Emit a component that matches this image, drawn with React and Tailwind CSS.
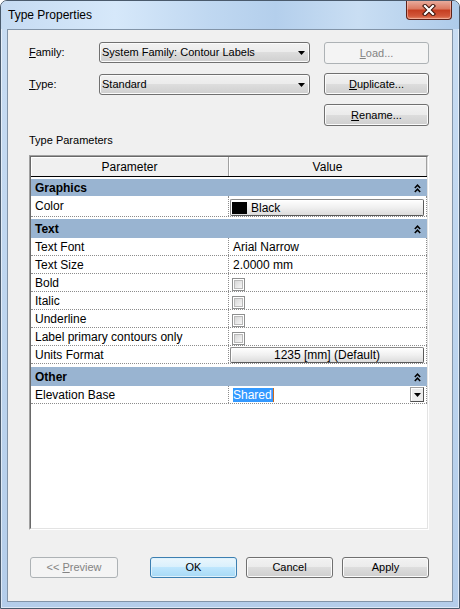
import React from "react";

const BTN =
  "flex items-center justify-center rounded-[3px] border border-[#707070] bg-[linear-gradient(180deg,#f2f2f2_0%,#ebebeb_50%,#dddddd_50%,#cfcfcf_100%)] shadow-[inset_0_0_0_1px_#fbfbfb] text-[11px] text-black";

const U = ({ children }) => <span className="underline underline-offset-[1px]">{children}</span>;

function Combo({ text, className }) {
  return (
    <div
      className={
        "flex h-[21px] w-[211px] items-center rounded-[3px] border border-[#707070] bg-[linear-gradient(180deg,#f2f2f2_0%,#ebebeb_50%,#dddddd_50%,#cfcfcf_100%)] shadow-[inset_0_0_0_1px_#fbfbfb] pl-[2px] pr-[4px] text-[11px] " +
        className
      }
    >
      <span className="flex-1 whitespace-nowrap">{text}</span>
      <svg width="7" height="4" viewBox="0 0 7 4">
        <path d="M0 0H7L3.5 4Z" fill="#000" />
      </svg>
    </div>
  );
}

function Chev() {
  return (
    <svg width="7" height="9" viewBox="0 0 7 9" className="mt-[1px]">
      <polyline points="0.8,4 3.5,1.2 6.2,4" fill="none" stroke="#000" strokeWidth="1.5" />
      <polyline points="0.8,8 3.5,5.2 6.2,8" fill="none" stroke="#000" strokeWidth="1.5" />
    </svg>
  );
}

function Group({ label, className }) {
  return (
    <div className={"flex items-center bg-[#99b4d1] pl-[4px] pr-[6px] text-[12px] font-bold " + className}>
      <span className="flex-1">{label}</span>
      <Chev />
    </div>
  );
}

function Row({ label, children, className, valueClass }) {
  return (
    <div className={"flex border-b border-dotted border-[#8c8c8c] " + className}>
      <div className="flex w-[198px] items-center border-r border-dotted border-[#8c8c8c] pl-[4px] whitespace-nowrap">
        {label}
      </div>
      <div className={"flex w-[198px] border-r border-dotted border-[#8c8c8c] " + valueClass}>{children}</div>
    </div>
  );
}

function Check() {
  return (
    <div className="ml-[3px] mt-[4px] h-[13px] w-[13px] border border-[#8e8f8f] bg-white p-[1px]">
      <div className="h-full w-full border border-[#b9b9b9] bg-[linear-gradient(135deg,#d8d8d8,#f6f6f6)]" />
    </div>
  );
}

const CELLBTN =
  "ml-[1px] flex w-[194px] rounded-[2px] border border-[#8a8a8a] border-r-[#5a5a5a] border-b-[#5a5a5a] bg-[linear-gradient(180deg,#ffffff_0%,#f0f0f0_50%,#dcdcdc_100%)] shadow-[inset_1px_1px_0_#ffffff]";

export default function App() {
  return (
    <div
      className="flex h-[609px] w-[460px] flex-col overflow-hidden rounded-t-[7px] border border-[#4a5a6c] bg-[linear-gradient(180deg,#c9ddf3_0%,#bcd4ee_60%,#b4cdea_100%)] shadow-[inset_0_0_0_1px_rgba(255,255,255,0.55)] text-black"
      style={{ fontFamily: '"Liberation Sans", Arial, sans-serif' }}
    >
      {/* Title bar */}
      <div className="flex h-[28px] shrink-0 bg-[linear-gradient(90deg,#c6dbf2_0%,#d6e8fa_25%,#c0d8f1_45%,#b4cfec_60%,#c9def3_78%,#aecbea_100%)]">
        <div className="flex flex-1 items-center pl-[7px] text-[12px]">Type Properties</div>
        <div className="-mt-px mr-[7px] flex h-[20px] w-[46px] items-center justify-center rounded-b-[4px] border border-t-0 border-[#5e2219] bg-[linear-gradient(180deg,#eab1a3_0%,#dc7b63_45%,#c63f22_55%,#d2583b_85%,#e58a69_100%)] shadow-[inset_0_0_0_1px_rgba(255,210,200,0.5)]">
          <svg width="14" height="12" viewBox="0 0 14 12">
            <path d="M3 2L11 10M11 2L3 10" stroke="#3a1209" strokeWidth="4.2" strokeLinecap="square" />
            <path d="M3 2L11 10M11 2L3 10" stroke="#ffffff" strokeWidth="2.2" strokeLinecap="square" />
          </svg>
        </div>
      </div>

      {/* Client area */}
      <div className="mx-[6px] flex flex-1 flex-col border border-[#8294a8] bg-[#f0f0f0] pl-[21px] pr-[23px]">
        {/* Family row */}
        <div className="mt-[12px] flex h-[22px] items-start">
          <div className="flex h-[21px] w-[70px] items-center text-[11px]">
            <U>F</U>amily:
          </div>
          <Combo text="System Family: Contour Labels" className="" />
          <div className="ml-auto flex h-[22px] w-[105px] items-center justify-center rounded-[3px] border border-[#adb2b5] bg-[#f4f4f4] text-[11px] text-[#838383]">
            <U>L</U>oad...
          </div>
        </div>
        {/* Type row */}
        <div className="mt-[9px] flex h-[22px] items-start">
          <div className="flex h-[21px] w-[70px] items-center pt-[1px] text-[11px]">
            <U>T</U>ype:
          </div>
          <Combo text="Standard" className="mt-[1px]" />
          <div className={"ml-auto h-[22px] w-[105px] " + BTN}>
            <U>D</U>uplicate...
          </div>
        </div>
        {/* Rename */}
        <div className="mt-[9px] flex h-[22px] justify-end">
          <div className={"h-[22px] w-[105px] " + BTN}>
            <U>R</U>ename...
          </div>
        </div>

        <div className="mt-[7px] h-[15px] text-[11px] leading-[15px]">Type Parameters</div>

        {/* Table */}
        <div className="mt-[7px] h-[375px] border border-t-[#a0a0a0] border-l-[#a0a0a0] border-r-white border-b-white">
          <div className="flex h-full flex-col border border-t-[#696969] border-l-[#696969] border-r-[#e3e3e3] border-b-[#e3e3e3] bg-white text-[12px]">
            {/* Header */}
            <div className="flex h-[20px] shrink-0 border-b border-black bg-[#f0f0f0]">
              <div className="flex w-[198px] items-center justify-center border-r border-[#a0a0a0] shadow-[inset_1px_1px_0_#ffffff]">
                Parameter
              </div>
              <div className="flex w-[198px] items-center justify-center border-r border-[#a0a0a0] shadow-[inset_1px_1px_0_#ffffff]">
                Value
              </div>
            </div>

            <Group label="Graphics" className="mt-[2px] h-[17px]" />
            <Row label="Color" className="h-[21px]" valueClass="items-end">
              <div className={"h-[17px] items-center " + CELLBTN}>
                <div className="ml-px h-[12px] w-[15px] bg-black" />
                <span className="ml-[4px]">Black</span>
              </div>
            </Row>

            <Group label="Text" className="mt-[2px] h-[19px]" />
            <Row label="Text Font" className="h-[18px]" valueClass="items-center pl-[4px]">
              Arial Narrow
            </Row>
            <Row label="Text Size" className="h-[18px]" valueClass="items-center pl-[4px]">
              2.0000 mm
            </Row>
            <Row label="Bold" className="h-[18px]" valueClass="items-start">
              <Check />
            </Row>
            <Row label="Italic" className="h-[18px]" valueClass="items-start">
              <Check />
            </Row>
            <Row label="Underline" className="h-[18px]" valueClass="items-start">
              <Check />
            </Row>
            <Row label="Label primary contours only" className="h-[18px]" valueClass="items-start">
              <Check />
            </Row>
            <Row label="Units Format" className="h-[18px]" valueClass="items-end">
              <div className={"h-[16px] items-center justify-center leading-none " + CELLBTN}>1235 [mm] (Default)</div>
            </Row>

            <Group label="Other" className="mt-[3px] h-[19px]" />
            <Row label="Elevation Base" className="h-[18px]" valueClass="items-center">
              <div className="ml-[4px] flex h-[14px] items-center bg-[#3399ff] pr-[1px] text-white">Shared</div>
              <div className="h-[14px] w-px bg-[#cc6a1e]" />
              <div className="ml-auto mr-[2px] flex h-[15px] w-[14px] items-center justify-center border border-[#a0a0a0] border-r-[#505050] border-b-[#505050] bg-[#ececec] shadow-[inset_1px_1px_0_#ffffff]">
                <svg width="7" height="4" viewBox="0 0 7 4">
                  <path d="M0 0H7L3.5 4Z" fill="#000" />
                </svg>
              </div>
            </Row>
          </div>
        </div>

        {/* Bottom buttons */}
        <div className="mt-[27px] flex h-[21px]">
          <div className="ml-[1px] flex h-[21px] w-[88px] items-center justify-center rounded-[3px] border border-[#adb2b5] bg-[#f4f4f4] text-[11px] text-[#838383] whitespace-pre">
            {"<< "}
            <U>P</U>
            {"review"}
          </div>
          <div className="ml-[32px] flex h-[21px] w-[87px] items-center justify-center rounded-[3px] border border-[#3c7fb1] bg-[linear-gradient(180deg,#eaf6fd_0%,#d9f0fc_50%,#bee6fd_50%,#a7d9f5_100%)] shadow-[inset_0_0_0_1px_#dff2fc] text-[11px]">
            OK
          </div>
          <div className={"ml-[9px] h-[21px] w-[87px] " + BTN}>Cancel</div>
          <div className={"ml-[9px] h-[21px] w-[87px] " + BTN}>Apply</div>
        </div>
      </div>
      {/* bottom frame */}
      <div className="h-[6px] shrink-0" />
    </div>
  );
}
